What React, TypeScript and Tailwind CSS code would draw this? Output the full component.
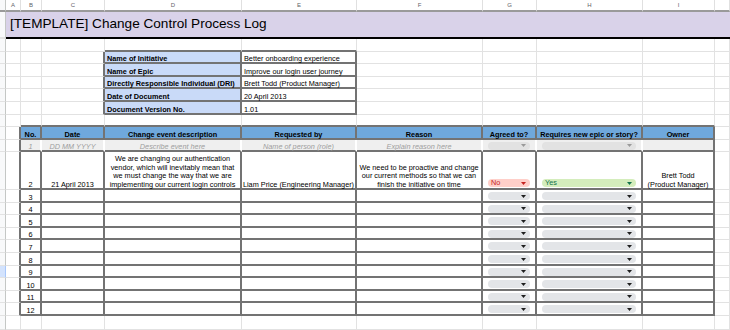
const GRID =
  "grid grid-cols-[6px_15px_21px_63px_137px_115px_126px_54px_106px_72px_15px]";

// cell border presets (sheets draws gridlines on the right/bottom of each cell)
const LIGHT = "border-r border-b border-[#e2e2e2]";
const DARK = "border-r-2 border-b-2 border-[#737373]";
const EDGE_R = "border-b border-b-[#e2e2e2] border-r-2 border-r-[#737373]";
const EDGE_B = "border-r border-r-[#e2e2e2] border-b-2 border-b-[#737373]";

const BODY = "text-[7.3px] leading-[8.5px]";

function RowHead({ selected }: { selected?: boolean }) {
  return (
    <div
      className={
        selected
          ? "border-r border-b border-r-[#a8c7fa] border-b-[#e2e2e2] bg-[#d3e3fd]"
          : "border-r border-b border-r-[#c4c7c5] border-b-[#e2e2e2] bg-[#f8f9fa]"
      }
    />
  );
}

// sheets sits bottom-aligned text a little lower than a plain line box
function T({ children }: { children: React.ReactNode }) {
  return <span className="-mb-[1.5px]">{children}</span>;
}

function Arrow({ color }: { color: string }) {
  return (
    <svg width="5" height="3" viewBox="0 0 5 3" className="shrink-0">
      <path d="M0 0h5L2.5 3z" fill={color} />
    </svg>
  );
}

function Chip({ tone, label }: { tone: "plain" | "faint" | "no" | "yes"; label?: string }) {
  const styles = {
    plain: { box: "bg-[#e3e5e8]", text: "text-black", arrow: "#1f1f1f" },
    faint: { box: "bg-[#e2e2e2]", text: "text-[#999]", arrow: "#9a9a9a" },
    no: { box: "bg-[#ffcfc9]", text: "text-[#c5221f]", arrow: "#c5221f" },
    yes: { box: "bg-[#d4edbc]", text: "text-[#11734b]", arrow: "#11734b" },
  }[tone];
  return (
    <div
      className={`mx-[5px] mb-[0.5px] flex h-[8px] flex-1 items-center justify-between rounded-full pl-[3px] pr-[4px] ${styles.box}`}
    >
      <span className={`${BODY} ${styles.text}`}>{label}</span>
      <Arrow color={styles.arrow} />
    </div>
  );
}

function blanks(count: number, selected?: boolean) {
  return [
    <RowHead key="h" selected={selected} />,
    ...Array.from({ length: count }, (_, i) => <div key={i} className={LIGHT} />),
  ];
}

const info = [
  ["Name of Initiative", "Better onboarding experience"],
  ["Name of Epic", "Improve our login user journey"],
  ["Directly Responsible Individual (DRI)", "Brett Todd (Product Manager)"],
  ["Date of Document", "20 April 2013"],
  ["Document Version No.", "1.01"],
];

const headers = [
  "No.",
  "Date",
  "Change event description",
  "Requested by",
  "Reason",
  "Agreed to?",
  "Requires new epic or story?",
  "Owner",
];

const placeholders = ["1", "DD MM YYYY", "Describe event here", "Name of person (role)", "Explain reason here"];

export default function App() {
  const cell = `${DARK} flex items-end justify-center ${BODY}`;
  return (
    <div className="h-[330px] w-[730px] overflow-hidden bg-white font-['Liberation_Sans',Arial,sans-serif] text-black">
      {/* column letters */}
      <div className={`${GRID} h-[12px]`}>
        <div className="border-r border-b-2 border-r-[#c4c7c5] border-b-[#9a9a9a] bg-[#f8f9fa]" />
        {["A", "B", "C", "D", "E", "F", "G", "H", "I", ""].map((l, i) => (
          <div
            key={i}
            className="flex items-center justify-center border-r border-b-2 border-r-[#e0e0e0] border-b-[#9a9a9a] text-[6px] text-[#5f6368]"
          >
            {l}
          </div>
        ))}
      </div>

      {/* title */}
      <div className={`${GRID} h-[27px]`}>
        <div className="border-r border-b-2 border-r-[#c4c7c5] border-b-[#e2e2e2] bg-[#f8f9fa]" />
        <div className="col-span-10 flex items-center border-b-2 border-black bg-[#d9d2e9] pl-[4px] text-[13.6px]">
          [TEMPLATE] Change Control Process Log
        </div>
      </div>

      {/* empty row above info table */}
      <div className={`${GRID} h-[12.6px]`}>
        <RowHead />
        <div className={LIGHT} />
        <div className={LIGHT} />
        <div className={LIGHT} />
        <div className={EDGE_B} />
        <div className={EDGE_B} />
        <div className={LIGHT} />
        <div className={LIGHT} />
        <div className={LIGHT} />
        <div className={LIGHT} />
        <div className={LIGHT} />
      </div>

      {info.map(([label, value]) => (
        <div key={label} className={`${GRID} h-[12.6px]`}>
          <RowHead />
          <div className={LIGHT} />
          <div className={LIGHT} />
          <div className={EDGE_R} />
          <div className={`${DARK} flex items-end bg-[#c9daf8] pl-[2px] font-bold whitespace-nowrap ${BODY}`}>
            <T>{label}</T>
          </div>
          <div className={`${DARK} flex items-end pl-[2px] whitespace-nowrap ${BODY}`}>
            <T>{value}</T>
          </div>
          <div className={LIGHT} />
          <div className={LIGHT} />
          <div className={LIGHT} />
          <div className={LIGHT} />
          <div className={LIGHT} />
        </div>
      ))}

      {/* empty row above main table */}
      <div className={`${GRID} h-[12.6px]`}>
        <RowHead />
        <div className={LIGHT} />
        {headers.map((h) => (
          <div key={h} className={EDGE_B} />
        ))}
        <div className={LIGHT} />
      </div>

      {/* table header */}
      <div className={`${GRID} h-[12.6px]`}>
        <RowHead />
        <div className={EDGE_R} />
        {headers.map((h) => (
          <div key={h} className={`${cell} bg-[#6fa8dc] font-bold whitespace-nowrap`}>
            <T>{h}</T>
          </div>
        ))}
        <div className={LIGHT} />
      </div>

      {/* example row */}
      <div className={`${GRID} h-[12.6px]`}>
        <RowHead />
        <div className={EDGE_R} />
        {placeholders.map((p) => (
          <div
            key={p}
            className={`flex items-end justify-center border-r-2 border-b-2 border-r-white border-b-[#737373] bg-[#efefef] italic text-[#9e9e9e] whitespace-nowrap ${BODY}`}
          >
            <T>{p}</T>
          </div>
        ))}
        <div className="flex items-end border-r-2 border-b-2 border-r-white border-b-[#737373] bg-[#efefef]">
          <Chip tone="faint" />
        </div>
        <div className="flex items-end border-r-2 border-b-2 border-r-white border-b-[#737373] bg-[#efefef]">
          <Chip tone="faint" />
        </div>
        <div className={`${DARK} bg-[#efefef]`} />
        <div className={LIGHT} />
      </div>

      {/* row 2 */}
      <div className={`${GRID} h-[37.6px]`}>
        <RowHead />
        <div className={EDGE_R} />
        <div className={cell}>
          <T>2</T>
        </div>
        <div className={cell}>
          <T>21 April 2013</T>
        </div>
        <div className={`${cell} text-center whitespace-nowrap`}>
          <T>
            We are changing our authentication
            <br />
            vendor, which will inevitably mean that
            <br />
            we must change the way that we are
            <br />
            implementing our current login controls
          </T>
        </div>
        <div className={`${cell} whitespace-nowrap`}>
          <T>Liam Price (Engineering Manager)</T>
        </div>
        <div className={`${cell} text-center whitespace-nowrap`}>
          <T>
            We need to be proactive and change
            <br />
            our current methods so that we can
            <br />
            finish the initiative on time
          </T>
        </div>
        <div className={`${DARK} flex items-end`}>
          <Chip tone="no" label="No" />
        </div>
        <div className={`${DARK} flex items-end`}>
          <Chip tone="yes" label="Yes" />
        </div>
        <div className={`${cell} text-center whitespace-nowrap`}>
          <T>
            Brett Todd
            <br />
            (Product Manager)
          </T>
        </div>
        <div className={LIGHT} />
      </div>

      {Array.from({ length: 10 }, (_, i) => i + 3).map((n) => (
        <div key={n} className={`${GRID} h-[12.6px]`}>
          <RowHead selected={n === 9} />
          <div className={EDGE_R} />
          <div className={cell}>
            <T>{n}</T>
          </div>
          <div className={DARK} />
          <div className={DARK} />
          <div className={DARK} />
          <div className={DARK} />
          <div className={`${DARK} flex items-end`}>
            <Chip tone="plain" />
          </div>
          <div className={`${DARK} flex items-end`}>
            <Chip tone="plain" />
          </div>
          <div className={DARK} />
          <div className={LIGHT} />
        </div>
      ))}

      <div className={`${GRID} h-[14px]`}>{blanks(10)}</div>
    </div>
  );
}
